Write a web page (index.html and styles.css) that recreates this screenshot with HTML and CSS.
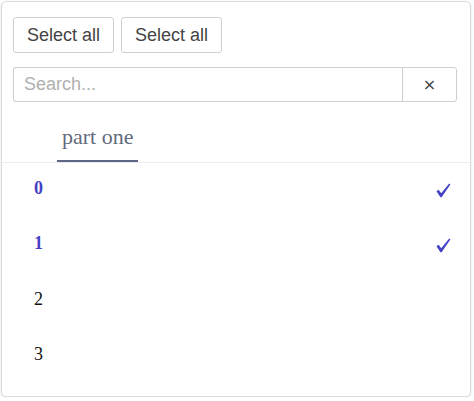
FILE: index.html
```html
<!DOCTYPE html>
<html>
<head>
<meta charset="utf-8">
<link rel="stylesheet" href="styles.css">
</head>
<body>
<div class="panel">
  <div class="controls">
    <div class="btn-row">
      <button class="btn">Select all</button>
      <button class="btn">Select all</button>
    </div>
    <div class="search">
      <input class="search-input" type="text" placeholder="Search...">
      <button class="clear">×</button>
    </div>
  </div>
  <div class="tabs">
    <div class="tab">part one</div>
  </div>
  <ul class="list">
    <li class="row selected"><span>0</span>
      <svg class="check" width="15" height="15" viewBox="0 0 15 15"><path d="M0.5 8.2 L2.6 6.8 L5.2 10.2 L13.2 0.6 L14.4 1.5 L5.6 14.2 L4.4 14.2 Z" fill="#4541c4"/></svg>
    </li>
    <li class="row selected"><span>1</span>
      <svg class="check" width="15" height="15" viewBox="0 0 15 15"><path d="M0.5 8.2 L2.6 6.8 L5.2 10.2 L13.2 0.6 L14.4 1.5 L5.6 14.2 L4.4 14.2 Z" fill="#4541c4"/></svg>
    </li>
    <li class="row"><span>2</span></li>
    <li class="row"><span>3</span></li>
  </ul>
</div>
</body>
</html>
```
FILE: styles.css
```css
html, body {
  margin: 0;
  padding: 0;
  background: #fff;
}
.panel {
  margin: 1px 3px 0 1px;
  border: 1px solid #dcdcdc;
  border-radius: 5px;
  box-shadow: 0 1px 3px rgba(0, 0, 0, 0.12);
  background: #fff;
  padding-bottom: 12px;
}
.controls {
  padding: 15px 13px 0 11px;
}
.btn-row {
  display: flex;
  gap: 7px;
}
.btn {
  height: 36px;
  padding: 0 13px;
  border: 1px solid #cfcfcf;
  border-radius: 3px;
  background: #fff;
  font-family: "Liberation Sans", Arial, sans-serif;
  font-size: 18px;
  color: #444;
  cursor: pointer;
}
.search {
  display: flex;
  margin-top: 14px;
  height: 35px;
}
.search-input {
  flex: 1;
  min-width: 0;
  box-sizing: border-box;
  height: 35px;
  border: 1px solid #cfcfcf;
  border-right: none;
  border-radius: 3px 0 0 3px;
  padding: 0 10px;
  font-family: "Liberation Sans", Arial, sans-serif;
  font-size: 18px;
  color: #333;
  outline: none;
}
.search-input::placeholder {
  color: #b0b0b0;
}
.clear {
  width: 55px;
  height: 35px;
  box-sizing: border-box;
  border: 1px solid #cfcfcf;
  border-radius: 0 3px 3px 0;
  background: #fff;
  font-family: "DejaVu Sans", sans-serif;
  font-size: 16px;
  color: #444;
  padding: 0;
}
.tabs {
  display: flex;
  margin-top: 23px;
  padding-left: 55px;
  border-bottom: 1px solid #ececec;
}
.tab {
  padding: 0 5px 11px;
  line-height: 24px;
  font-family: "Liberation Serif", "Times New Roman", serif;
  font-size: 22px;
  color: #636a7c;
  border-bottom: 2px solid #5d6685;
}
.list {
  list-style: none;
  margin: 0;
  padding: 0;
}
.row {
  display: flex;
  align-items: flex-start;
  justify-content: space-between;
  box-sizing: border-box;
  height: 55.33px;
  padding: 15px 19px 0 32px;
  font-family: "Liberation Serif", "Times New Roman", serif;
  font-size: 18px;
  line-height: 20px;
  color: #111;
}
.row.selected {
  color: #4541c4;
  font-weight: bold;
}
.check {
  margin-top: 5px;
}
```
